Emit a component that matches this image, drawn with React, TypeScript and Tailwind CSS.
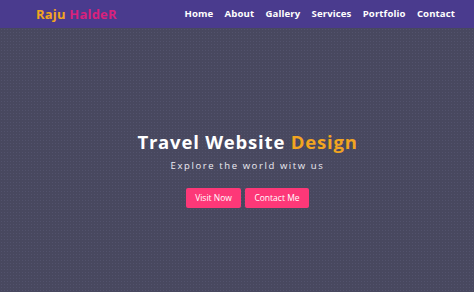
import React from "react";

export default function App() {
  const links = ["Home", "About", "Gallery", "Services", "Portfolio", "Contact"];
  return (
    <div
      className="w-[474px] h-[292px] flex flex-col bg-[#48485f] overflow-hidden"
      style={{ fontFamily: '"Open Sans", "Liberation Sans", sans-serif' }}
    >
      <nav className="h-[28px] bg-[#4a3b8e] flex items-center justify-between pl-[36px] pr-[19px] shrink-0">
        <div className="text-[13px] font-bold tracking-[0.2px] leading-none">
          <span className="text-[#f2a521]">Raju </span>
          <span className="text-[#d9217c]">HaldeR</span>
        </div>
        <ul className="flex items-center gap-[11.3px] text-[9.6px] font-bold text-white leading-none tracking-[0.1px]">
          {links.map((l) => (
            <li key={l}>{l}</li>
          ))}
        </ul>
      </nav>
      <main className="flex-1 flex flex-col items-center pl-[21px] pt-[105px] bg-[radial-gradient(#52526c_0.6px,transparent_0.6px)] bg-[length:3px_3px]">
        <h1 className="text-[18.5px] font-bold text-white tracking-[0.8px] leading-none">
          Travel Website <span className="text-[#f2a521]">Design</span>
        </h1>
        <p className="mt-[9px] text-[9.5px] text-[#ecebf2] tracking-[1.6px] leading-none">
          Explore the world witw us
        </p>
        <div className="mt-[18px] flex gap-[4px]">
          <button className="h-[20px] w-[55px] bg-[#fd3878] text-white text-[8.5px] font-medium rounded-[2px]">
            Visit Now
          </button>
          <button className="h-[20px] w-[64px] bg-[#fd3878] text-white text-[8.5px] font-medium rounded-[2px]">
            Contact Me
          </button>
        </div>
      </main>
    </div>
  );
}
